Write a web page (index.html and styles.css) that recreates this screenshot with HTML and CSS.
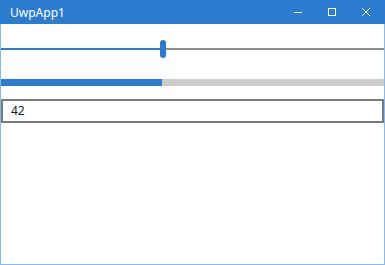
FILE: index.html
```html
<!DOCTYPE html>
<html>
   <head>
      <meta charset="UTF-8">
      <title>UwpApp1</title>
      <link rel="stylesheet" href="styles.css">
   </head>
   <body>
      <div class="window">
         <div class="title-bar">
            <span class="title">UwpApp1</span>
            <div class="caption-buttons">
               <span class="caption-btn">
                  <svg width="10" height="10" viewBox="0 0 10 10"><path d="M1 5.5H9" stroke="#fff" stroke-width="1"/></svg>
               </span>
               <span class="caption-btn">
                  <svg width="10" height="10" viewBox="0 0 10 10"><rect x="1.5" y="1.5" width="7" height="7" fill="none" stroke="#fff" stroke-width="1"/></svg>
               </span>
               <span class="caption-btn">
                  <svg width="10" height="10" viewBox="0 0 10 10"><path d="M1 1L9 9M9 1L1 9" stroke="#fff" stroke-width="1"/></svg>
               </span>
            </div>
         </div>

         <div class="content">
            <div class="slider">
               <div class="slider-fill" style="width: calc(42% - 2px)"></div>
               <div class="slider-thumb"></div>
               <div class="slider-rest"></div>
            </div>

            <div class="progress">
               <div class="progress-fill" style="width: 42%"></div>
            </div>

            <div class="textbox">42</div>
         </div>
      </div>
   </body>
</html>
```

FILE: styles.css
```css
*
{
   box-sizing: border-box;
}

body
{
   margin: 0;
   font-family: "Segoe UI", "Noto Sans", "Open Sans", sans-serif;
   background: #ffffff;
}

.window
{
   width: 385px;
   height: 265px;
   display: flex;
   flex-direction: column;
}

.title-bar
{
   height: 24px;
   background: #2b7bd0;
   color: #ffffff;
   display: flex;
   align-items: center;
   justify-content: space-between;
   padding-left: 10px;
}

.title
{
   font-size: 12px;
}

.caption-buttons
{
   display: flex;
   height: 100%;
   padding-right: 2px;
}

.caption-btn
{
   width: 34px;
   height: 100%;
   display: flex;
   align-items: center;
   justify-content: center;
}

.content
{
   flex: 1;
   border: 1px solid #80bbf6;
   border-top: none;
   display: flex;
   flex-direction: column;
}

.slider
{
   margin-top: 16px;
   height: 18px;
   display: flex;
   align-items: center;
}

.slider-fill
{
   height: 2px;
   background: #2b7bd0;
}

.slider-thumb
{
   width: 6px;
   height: 18px;
   border-radius: 3px;
   background: #2b7bd0;
}

.slider-rest
{
   flex: 1;
   height: 2px;
   background: #8e8e8e;
}

.progress
{
   margin-top: 21px;
   height: 7px;
   background: #cccccc;
}

.progress-fill
{
   height: 100%;
   background: #2b7bd0;
}

.textbox
{
   margin-top: 13px;
   height: 24px;
   border: 2px solid #7a7a7a;
   padding-left: 8px;
   font-size: 12px;
   line-height: 20px;
   color: #1a1a1a;
}
```
